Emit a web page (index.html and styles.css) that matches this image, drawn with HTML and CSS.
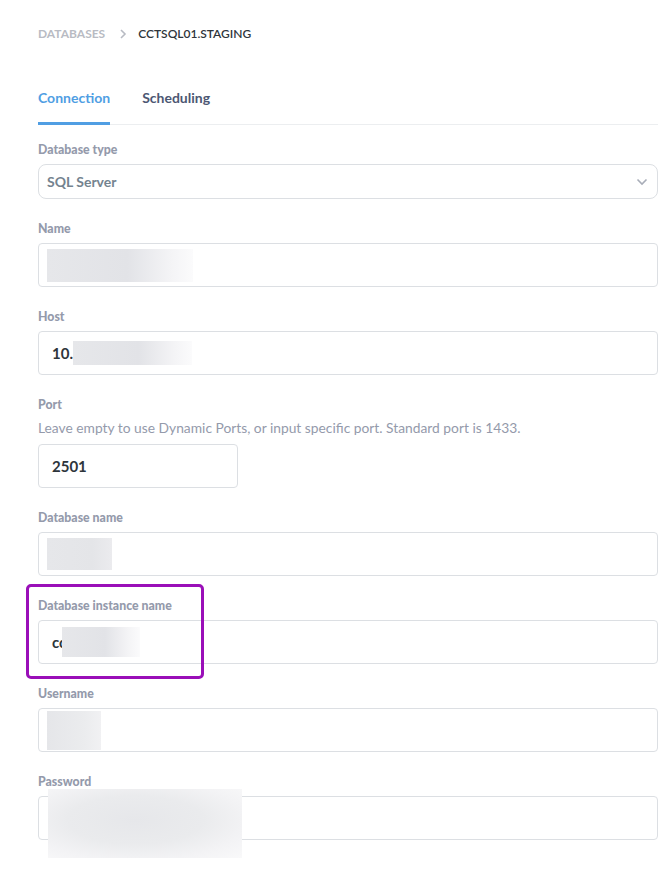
FILE: index.html
```html
<!DOCTYPE html>
<html>
<head>
<meta charset="utf-8">
<link rel="stylesheet" href="styles.css">
</head>
<body>
<div class="page">
  <nav class="crumbs">
    <span class="crumb-root">DATABASES</span>
    <svg class="crumb-sep" width="8" height="10" viewBox="0 0 8 10"><path d="M2 1l4 4-4 4" fill="none" stroke="#b8bbc3" stroke-width="1.6"/></svg>
    <span class="crumb-cur">CCTSQL01.STAGING</span>
  </nav>

  <div class="tabs">
    <div class="tab active">Connection</div>
    <div class="tab">Scheduling</div>
  </div>

  <div class="field first">
    <div class="label">Database type</div>
    <div class="select">
      <span>SQL Server</span>
      <svg width="12" height="8" viewBox="0 0 12 8"><path d="M1.5 1.5l4.5 4.5 4.5-4.5" fill="none" stroke="#a8adb8" stroke-width="1.6"/></svg>
    </div>
  </div>

  <div class="field">
    <div class="label">Name</div>
    <div class="input pad-s"><span class="blur b-name"></span></div>
  </div>

  <div class="field">
    <div class="label">Host</div>
    <div class="input"><span class="val">10.</span><span class="blur b-host"></span></div>
  </div>

  <div class="field">
    <div class="label">Port</div>
    <div class="help">Leave empty to use Dynamic Ports, or input specific port. Standard port is 1433.</div>
    <div class="input short"><span class="val">2501</span></div>
  </div>

  <div class="field">
    <div class="label">Database name</div>
    <div class="input pad-s"><span class="blur b-dbname"></span></div>
  </div>

  <div class="field highlighted">
    <div class="label">Database instance name</div>
    <div class="input"><span class="val">cc</span><span class="blur b-inst"></span></div>
    <div class="highlight"></div>
  </div>

  <div class="field">
    <div class="label">Username</div>
    <div class="input pad-s"><span class="blur b-user"></span></div>
  </div>

  <div class="field">
    <div class="label">Password</div>
    <div class="input"></div>
    <span class="blur b-pass"></span>
  </div>
</div>
</body>
</html>
```

FILE: styles.css
```css
html, body {
  margin: 0;
  padding: 0;
  background: #ffffff;
  font-family: Lato, "Open Sans", sans-serif;
}

.page {
  padding: 26px 6px 29px 38px;
  width: 620px;
}

.crumbs {
  display: flex;
  align-items: center;
  height: 16px;
  font-size: 12px;
  font-weight: 700;
  line-height: 16px;
}

.crumb-root {
  color: #b8bbc3;
}

.crumb-sep {
  margin: 0 11px 0 14px;
}

.crumb-cur {
  color: #2e353b;
  font-weight: 600;
}

.tabs {
  display: flex;
  margin-top: 46px;
  border-bottom: 1px solid #eceef0;
}

.tab {
  font-size: 14px;
  font-weight: 700;
  line-height: 20px;
  color: #4c5773;
  padding-bottom: 14px;
  border-bottom: 3px solid transparent;
  margin-right: 32px;
  margin-bottom: -1px;
}

.tab.active {
  color: #509ee3;
  border-bottom-color: #509ee3;
}

.field {
  position: relative;
  margin-top: 22px;
}

.field.first {
  margin-top: 17px;
}

.label {
  font-size: 12.3px;
  font-weight: 900;
  line-height: 16px;
  color: #949aab;
  margin-bottom: 6px;
}

.help {
  font-size: 13.8px;
  line-height: 20px;
  color: #949aab;
  margin-top: -1px;
  margin-bottom: 6px;
}

.select {
  box-sizing: border-box;
  height: 35px;
  border: 1px solid #dcdfe3;
  border-radius: 8px;
  display: flex;
  align-items: center;
  justify-content: space-between;
  padding: 0 9px 0 8px;
  font-size: 14px;
  font-weight: 700;
  color: #74838f;
}

.input {
  box-sizing: border-box;
  height: 44px;
  border: 1px solid #dcdfe3;
  border-radius: 4px;
  display: flex;
  align-items: center;
  padding-left: 13px;
  font-size: 15px;
  font-weight: 700;
  color: #2e353b;
}

.input.pad-s {
  padding-left: 8px;
}

.input.short {
  width: 200px;
}

.val {
  line-height: 20px;
}

.blur {
  display: inline-block;
  background: linear-gradient(90deg, #e6e7ea 0%, #e2e3e7 55%, #f4f4f6 85%, #fbfbfc 100%);
}

.b-name { width: 146px; height: 33px; }
.b-host { width: 119px; height: 24px; }
.b-dbname { width: 65px; height: 32px; background: linear-gradient(90deg, #e6e7ea, #e4e5e8 70%, #ebebee); }
.b-inst { width: 78px; height: 30px; margin-left: -4px; }
.b-user { width: 54px; height: 39px; background: linear-gradient(90deg, #e5e6e9, #ebecee 70%, #f1f1f3); }

.b-pass {
  position: absolute;
  left: 10px;
  top: 15px;
  width: 194px;
  height: 69px;
  background: radial-gradient(ellipse at 45% 45%, #e6e7ea 0%, #eaebed 45%, #f3f3f5 75%, #f9f9fa 100%);
}

.highlight {
  position: absolute;
  left: -12px;
  top: -14px;
  width: 172px;
  height: 89px;
  border: 3px solid #9a0fb8;
  border-radius: 5px;
  pointer-events: none;
}
```
